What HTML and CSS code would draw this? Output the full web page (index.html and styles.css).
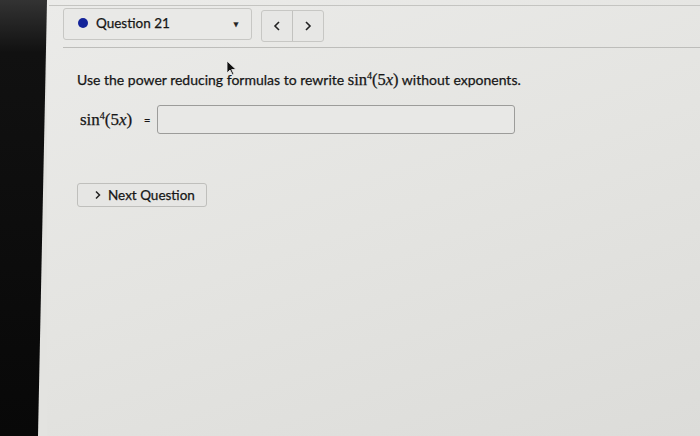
FILE: index.html
```html
<!DOCTYPE html>
<html>
<head>
<meta charset="utf-8">
<link rel="stylesheet" href="styles.css">
</head>
<body>
<div class="bezel"></div>
<div class="screen">
  <div class="topline"></div>
  <div class="header">
    <div class="qselect">
      <span class="dot"></span>
      <span class="qtitle">Question 21</span>
      <span class="caret">&#9660;</span>
    </div>
    <div class="nav">
      <div class="navbtn">
        <svg width="8" height="10" viewBox="0 0 8 10"><path d="M6 1 L2 5 L6 9" fill="none" stroke="#222" stroke-width="1.6"/></svg>
      </div>
      <div class="navbtn">
        <svg width="8" height="10" viewBox="0 0 8 10"><path d="M2 1 L6 5 L2 9" fill="none" stroke="#222" stroke-width="1.6"/></svg>
      </div>
    </div>
  </div>
  <div class="content">
    <p class="prompt">Use the power reducing formulas to rewrite <span class="math">sin<sup>4</sup>(5<i>x</i>)</span> without exponents.</p>
    <div class="answer">
      <span class="math big">sin<sup>4</sup>(5<i>x</i>)</span>
      <span class="eq">=</span>
      <div class="input"></div>
    </div>
    <div class="next">
      <svg width="8" height="10" viewBox="0 0 8 10"><path d="M2 1.5 L5.5 5 L2 8.5" fill="none" stroke="#222" stroke-width="1.5"/></svg>
      <span>Next Question</span>
    </div>
  </div>
  <svg class="cursor" width="11" height="16" viewBox="0 0 11 16"><path d="M1 1 L1 13 L4 10 L6.5 15 L8 14.3 L5.7 9.5 L10 9.5 Z" fill="#111" stroke="#eee" stroke-width="0.8"/></svg>
</div>
</body>
</html>
```
FILE: styles.css
```css
html, body {
  margin: 0;
  padding: 0;
}
body {
  width: 700px;
  height: 436px;
  overflow: hidden;
  display: flex;
  background: #e3e3e0;
  font-family: Lato, "Open Sans", sans-serif;
  color: #161616;
  -webkit-text-stroke: 0.25px #161616;
}
.bezel {
  width: 47px;
  flex: none;
  background: linear-gradient(180deg, #333 0%, #111 12%, #080808 100%);
  clip-path: polygon(0 0, 100% 0, 38px 100%, 0 100%);
}
.screen {
  flex: 1;
  position: relative;
  background: linear-gradient(160deg, #ebebe9 0%, #e4e4e1 50%, #dcdcd9 100%);
}
.topline {
  height: 5px;
  border-bottom: 1px solid #c4c4c1;
  margin-left: 2px;
}
.header {
  display: flex;
  gap: 9px;
  margin-left: 16px;
  padding-top: 2px;
  padding-bottom: 5px;
  border-bottom: 1px solid #bdbdba;
  height: 34px;
}
.qselect {
  height: 30px;
  border: 1px solid #c7c7c4;
  border-radius: 3px;
  background: #e9e9e7;
  display: flex;
  align-items: center;
  padding-left: 14px;
  padding-bottom: 3px;
  box-sizing: content-box;
  height: 27px;
  width: 173px;
}
.dot {
  width: 10px;
  height: 10px;
  border-radius: 50%;
  background: #14249a;
  margin-right: 8px;
}
.qtitle {
  font-size: 13.5px;
  flex: 1;
}
.caret {
  font-size: 8px;
  margin-right: 11px;
  margin-top: 3px;
  color: #222;
}
.nav {
  margin-top: 2px;
  display: flex;
  border: 1px solid #c7c7c4;
  border-radius: 3px;
  height: 30px;
  background: #e7e7e5;
}
.navbtn {
  width: 30px;
  display: flex;
  align-items: center;
  justify-content: center;
}
.navbtn + .navbtn {
  border-left: 1px solid #c2c2bf;
}
.content {
  padding-left: 30px;
  padding-top: 22px;
}
.prompt {
  margin: 0;
  font-size: 14px;
  line-height: 20px;
}
.math {
  font-family: "Liberation Serif", "DejaVu Serif", serif;
  font-size: 16.5px;
}
.math sup {
  font-size: 10px;
  vertical-align: 6px;
  line-height: 0;
}
.answer {
  display: flex;
  align-items: center;
  margin-top: 15px;
  margin-left: 3px;
  height: 29px;
}
.math.big {
  font-size: 17px;
  width: 64px;
}
.eq {
  font-size: 11px;
  margin-right: 7px;
}
.input {
  width: 356px;
  height: 27px;
  border: 1px solid #9c9c9a;
  border-radius: 3px;
  background: #e8e8e6;
}
.next {
  margin-top: 49px;
  width: 130px;
  height: 24px;
  border: 1px solid #bfbfbc;
  border-radius: 3px;
  background: #e6e6e4;
  display: flex;
  align-items: center;
  gap: 6px;
  padding-left: 16px;
  box-sizing: border-box;
  font-size: 13.5px;
}
.cursor {
  position: absolute;
  left: 179px;
  top: 60px;
}
```
